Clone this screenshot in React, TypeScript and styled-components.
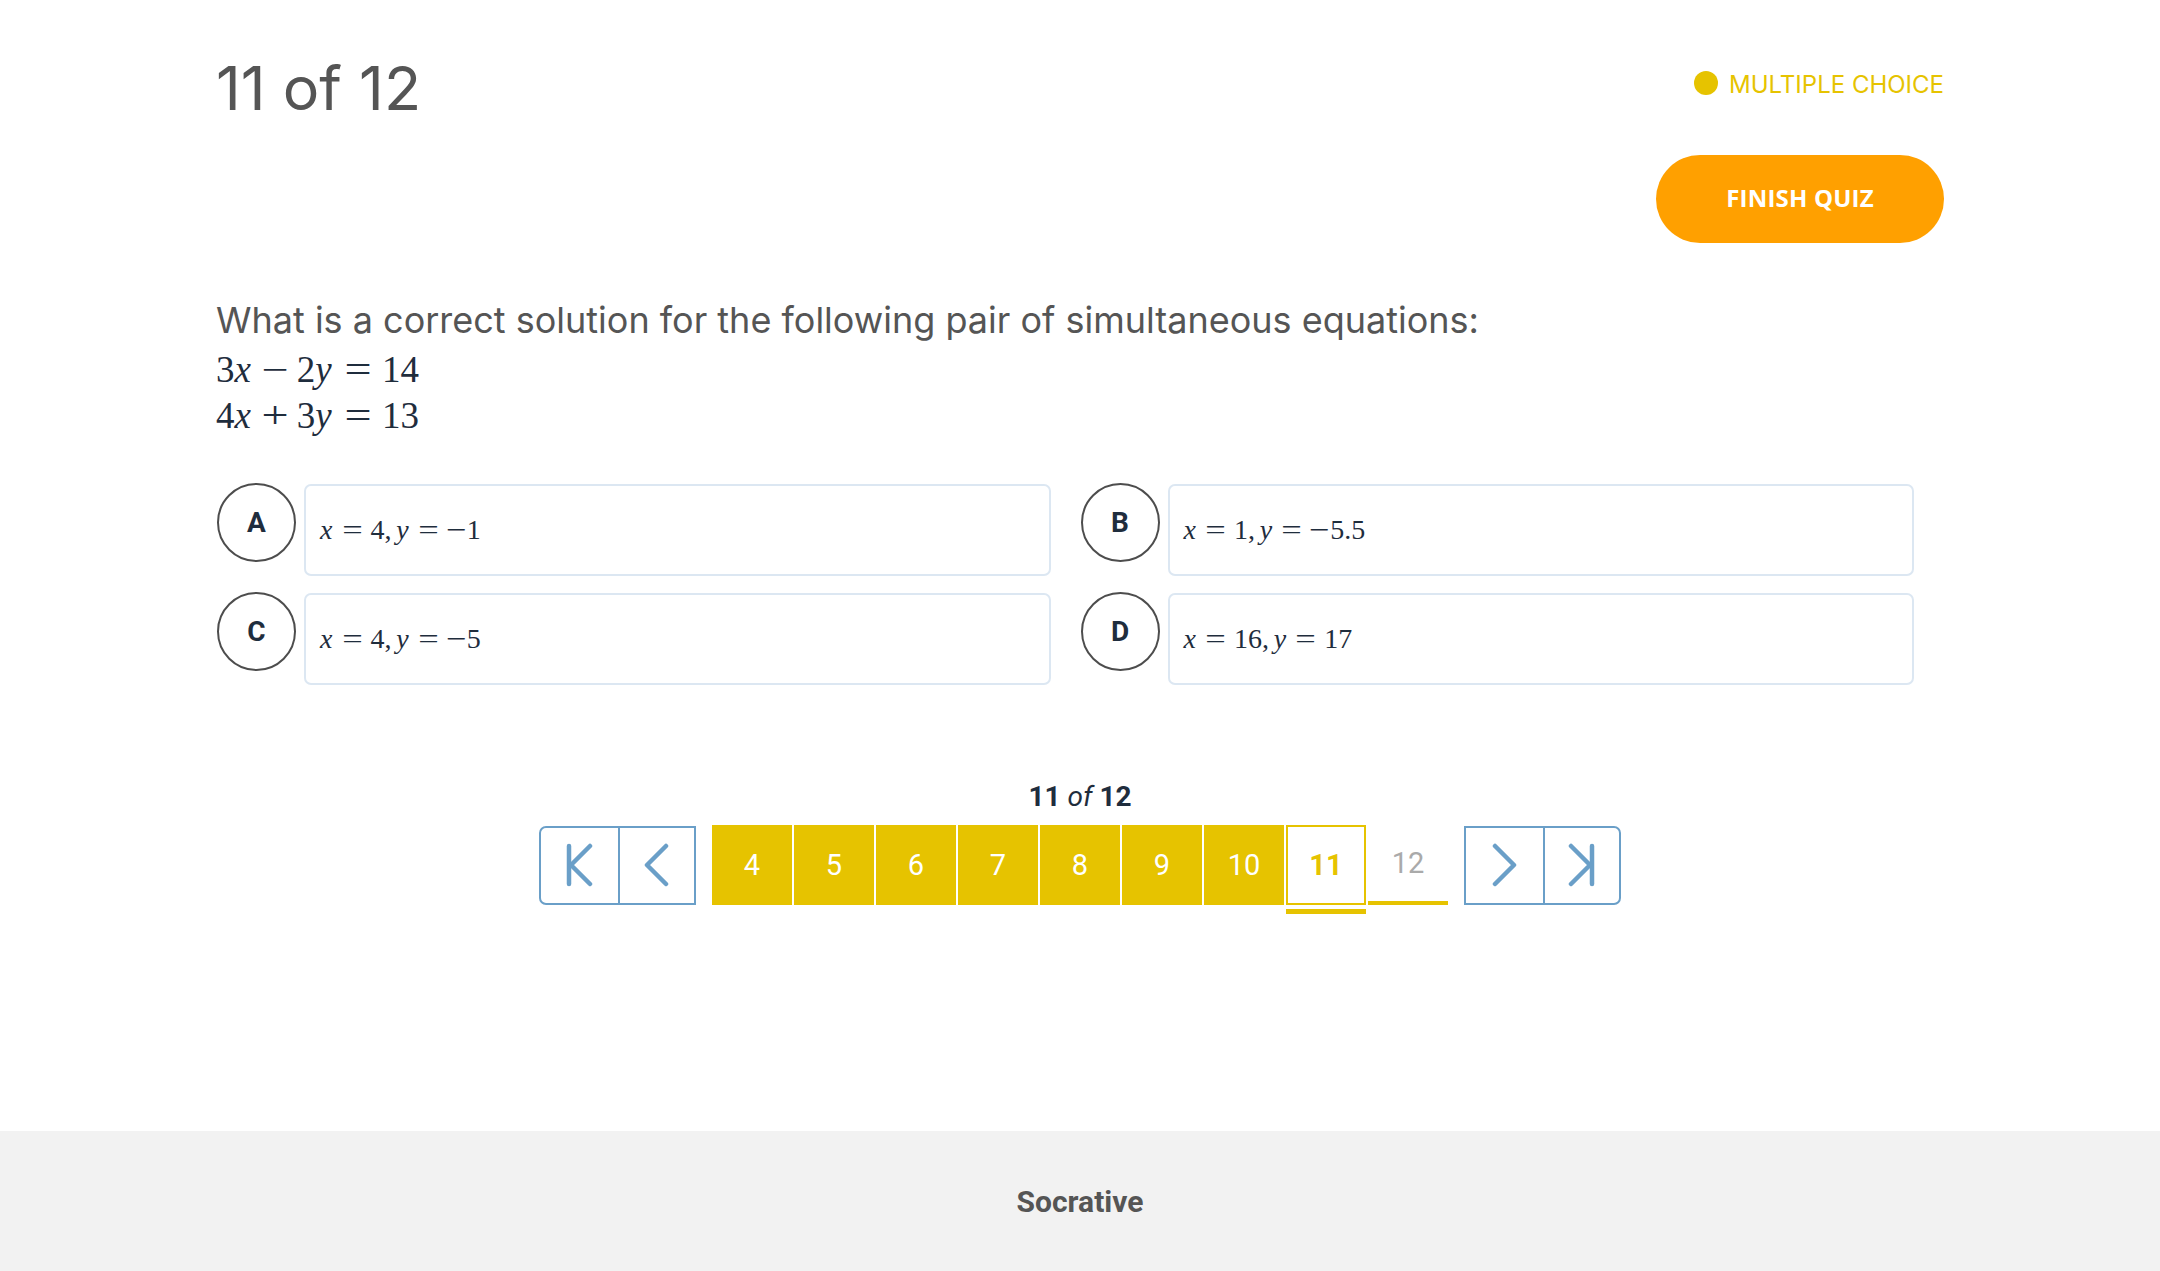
import React from "react";
import styled, { createGlobalStyle, css } from "styled-components";

const GlobalStyle = createGlobalStyle`
  html, body { margin: 0; padding: 0; background: #ffffff; }
  body { font-family: Roboto, "Liberation Sans", Arial, sans-serif; }
  * { box-sizing: border-box; }
`;

const YELLOW = "#e6c300";
const NAVY = "#1f2d3d";
const BLUE = "#6a9fc8";

const Page = styled.div`
  min-height: 100vh;
  display: flex;
  flex-direction: column;
`;

const Main = styled.main`
  flex: 1;
  width: 1728px;
  margin: 0 auto;
`;

const Header = styled.header`
  display: flex;
  justify-content: space-between;
  align-items: flex-start;
  padding-top: 58px;
`;

const Title = styled.h1`
  margin: 0;
  font-family: Inter, Roboto, sans-serif;
  font-size: 61px;
  line-height: 1;
  font-weight: 400;
  color: #555555;
`;

const RightCol = styled.div`
  display: flex;
  flex-direction: column;
  align-items: flex-end;
  margin-top: 11px;
`;

const TypeBadge = styled.div`
  display: flex;
  align-items: center;
  gap: 11px;
  height: 28px;
  color: ${YELLOW};
  font-family: Inter, Roboto, sans-serif;
  font-size: 24px;
  line-height: 28px;
  font-weight: 400;
`;

const Dot = styled.span`
  width: 24px;
  height: 24px;
  border-radius: 50%;
  background: ${YELLOW};
`;

const BadgeText = styled.span`
  padding-top: 3px;
`;

const FinishButton = styled.button`
  margin-top: 58px;
  width: 288px;
  height: 88px;
  padding: 0 0 4px;
  border: none;
  border-radius: 44px;
  background: #ffa000;
  color: #ffffff;
  font-family: "Open Sans", sans-serif;
  font-weight: 700;
  font-size: 24px;
  letter-spacing: 0.2px;
  cursor: pointer;
`;

const Question = styled.section`
  margin-top: 55px;
`;

const QuestionText = styled.p`
  margin: 0;
  font-family: Inter, Roboto, sans-serif;
  font-size: 36px;
  line-height: 44px;
  color: #555555;
`;

const MathLine = styled.div`
  margin-top: 5px;
  font-size: 37px;
  line-height: 46px;
  & + & {
    margin-top: 0;
  }
`;

const MathWrap = styled.span`
  font-family: "Liberation Serif", "Times New Roman", serif;
  color: ${NAVY};
  white-space: nowrap;
`;

type Kind = "n" | "v" | "bin" | "rel" | "un" | "punct";

const opGlyph = css`
  display: inline-block;
  width: 0.6em;
  text-align: center;
  transform: scaleX(1.3);
`;

const Tok = styled.span<{ $kind: Kind }>`
  font-style: ${(p) => (p.$kind === "v" ? "italic" : "normal")};
  ${(p) =>
    p.$kind === "v" &&
    css`
      padding-right: 0.04em;
    `}
  ${(p) =>
    p.$kind === "bin" &&
    css`
      ${opGlyph};
      margin: 0 0.3em;
    `}
  ${(p) =>
    p.$kind === "rel" &&
    css`
      ${opGlyph};
      margin: 0 0.36em;
    `}
  ${(p) =>
    p.$kind === "un" &&
    css`
      ${opGlyph};
      margin: 0 0.08em 0 0.04em;
    `}
  ${(p) =>
    p.$kind === "punct" &&
    css`
      margin-right: 0.167em;
    `}
`;

function parse(src: string): { k: Kind; t: string }[] {
  const out: { k: Kind; t: string }[] = [];
  for (const ch of src) {
    if (ch === " ") continue;
    const prev = out[out.length - 1];
    if (ch === "=") out.push({ k: "rel", t: "=" });
    else if (ch === "+") out.push({ k: "bin", t: "+" });
    else if (ch === "−") {
      if (!prev || prev.k === "rel" || prev.k === "bin") out.push({ k: "un", t: "−" });
      else out.push({ k: "bin", t: "−" });
    } else if (ch === ",") out.push({ k: "punct", t: "," });
    else if (/[a-z]/.test(ch)) out.push({ k: "v", t: ch });
    else out.push({ k: "n", t: ch });
  }
  return out;
}

const MathExpr = ({ src }: { src: string }) => (
  <MathWrap>
    {parse(src).map((tk, i) => (
      <Tok key={i} $kind={tk.k}>
        {tk.t}
      </Tok>
    ))}
  </MathWrap>
);

const OptionsGrid = styled.div`
  margin-top: 44px;
  display: grid;
  grid-template-columns: 1fr 1fr;
  column-gap: 29px;
  row-gap: 16px;
  padding-right: 30px;
`;

const Option = styled.div`
  display: flex;
  align-items: flex-start;
  gap: 8px;
  padding-left: 1px;
`;

const Letter = styled.div`
  flex: none;
  width: 79px;
  height: 79px;
  border-radius: 50%;
  border: 2px solid #4d4d4d;
  display: flex;
  align-items: center;
  justify-content: center;
  font-weight: 700;
  font-size: 28px;
  color: ${NAVY};
`;

const AnswerBox = styled.div`
  flex: 1;
  margin-top: 1px;
  height: 92px;
  border: 2px solid #dce7f2;
  border-radius: 7px;
  padding-left: 14px;
  display: flex;
  align-items: center;
  font-size: 28px;
`;

const Pager = styled.nav`
  margin-top: 98px;
  display: flex;
  flex-direction: column;
  align-items: center;
`;

const PagerLabel = styled.div`
  font-size: 28px;
  line-height: 28px;
  color: ${NAVY};
  font-weight: 700;
  & em {
    font-weight: 400;
    font-style: italic;
  }
`;

const PagerRow = styled.div`
  margin-top: 14px;
  display: flex;
  align-items: center;
  gap: 16px;
`;

const NavGroup = styled.div<{ $side: "left" | "right" }>`
  display: flex;
  height: 79px;
  border: 2px solid ${BLUE};
  border-radius: ${(p) => (p.$side === "left" ? "7px 0 0 7px" : "0 7px 7px 0")};
`;

const NavButton = styled.button`
  width: 76.5px;
  height: 100%;
  padding: 0;
  border: none;
  background: transparent;
  display: flex;
  align-items: center;
  justify-content: center;
  cursor: pointer;
  & + & {
    border-left: 2px solid ${BLUE};
  }
`;

const Pages = styled.div`
  display: flex;
  gap: 2px;
`;

const PageItem = styled.div<{ $state: "done" | "current" | "todo" }>`
  width: 80px;
  height: 80px;
  display: flex;
  align-items: center;
  justify-content: center;
  font-size: 29px;
  ${(p) =>
    p.$state === "done" &&
    css`
      background: ${YELLOW};
      color: #ffffff;
    `}
  ${(p) =>
    p.$state === "current" &&
    css`
      border: 2px solid ${YELLOW};
      color: ${YELLOW};
      font-weight: 700;
      box-shadow: 0 4px 0 #ffffff, 0 9px 0 ${YELLOW};
    `}
  ${(p) =>
    p.$state === "todo" &&
    css`
      border-bottom: 4px solid ${YELLOW};
      color: #aaaaaa;
    `}
`;

const Footer = styled.footer`
  height: 140px;
  background: #f2f2f2;
  display: flex;
  align-items: center;
  justify-content: center;
  font-size: 30px;
  font-weight: 700;
  color: #555555;
`;

const Icon = ({ kind }: { kind: "first" | "prev" | "next" | "last" }) => {
  const common = {
    fill: "none",
    stroke: BLUE,
    strokeWidth: 4.5,
    strokeLinecap: "round" as const,
    strokeLinejoin: "round" as const,
  };
  return (
    <svg width="32" height="44" viewBox="0 0 32 44">
      {kind === "first" && (
        <>
          <path d="M6 3 V41" {...common} />
          <path d="M27 3 L8 22 L27 41" {...common} />
        </>
      )}
      {kind === "prev" && <path d="M25 3 L6 22 L25 41" {...common} />}
      {kind === "next" && <path d="M7 3 L26 22 L7 41" {...common} />}
      {kind === "last" && (
        <>
          <path d="M26 3 V41" {...common} />
          <path d="M5 3 L24 22 L5 41" {...common} />
        </>
      )}
    </svg>
  );
};

const options = [
  { letter: "A", expr: "x = 4, y = −1" },
  { letter: "B", expr: "x = 1, y = −5.5" },
  { letter: "C", expr: "x = 4, y = −5" },
  { letter: "D", expr: "x = 16, y = 17" },
];

const pages = [4, 5, 6, 7, 8, 9, 10, 11, 12];

export default function App() {
  return (
    <Page>
      <GlobalStyle />
      <Main>
        <Header>
          <Title>11 of 12</Title>
          <RightCol>
            <TypeBadge>
              <Dot />
              <BadgeText>MULTIPLE CHOICE</BadgeText>
            </TypeBadge>
            <FinishButton>FINISH QUIZ</FinishButton>
          </RightCol>
        </Header>

        <Question>
          <QuestionText>
            What is a correct solution for the following pair of simultaneous equations:
          </QuestionText>
          <MathLine>
            <MathExpr src="3x − 2y = 14" />
          </MathLine>
          <MathLine>
            <MathExpr src="4x + 3y = 13" />
          </MathLine>
        </Question>

        <OptionsGrid>
          {options.map((o) => (
            <Option key={o.letter}>
              <Letter>{o.letter}</Letter>
              <AnswerBox>
                <MathExpr src={o.expr} />
              </AnswerBox>
            </Option>
          ))}
        </OptionsGrid>

        <Pager>
          <PagerLabel>
            11 <em>of</em> 12
          </PagerLabel>
          <PagerRow>
            <NavGroup $side="left">
              <NavButton aria-label="First">
                <Icon kind="first" />
              </NavButton>
              <NavButton aria-label="Previous">
                <Icon kind="prev" />
              </NavButton>
            </NavGroup>
            <Pages>
              {pages.map((n) => (
                <PageItem key={n} $state={n < 11 ? "done" : n === 11 ? "current" : "todo"}>
                  {n}
                </PageItem>
              ))}
            </Pages>
            <NavGroup $side="right">
              <NavButton aria-label="Next">
                <Icon kind="next" />
              </NavButton>
              <NavButton aria-label="Last">
                <Icon kind="last" />
              </NavButton>
            </NavGroup>
          </PagerRow>
        </Pager>
      </Main>
      <Footer>Socrative</Footer>
    </Page>
  );
}
